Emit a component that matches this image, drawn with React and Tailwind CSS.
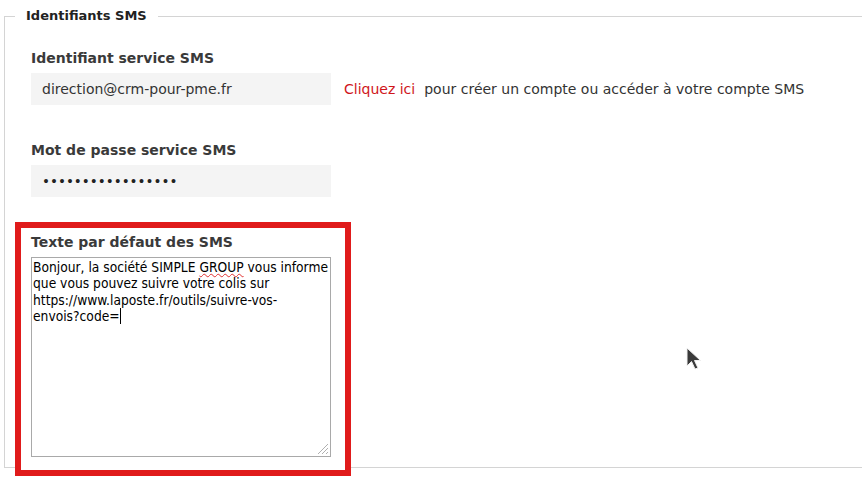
export default function App() {
  return (
    <div className="relative w-[862px] h-[486px] overflow-hidden bg-white font-['DejaVu_Sans',sans-serif] text-[14px] text-[#333]">
      <fieldset className="ml-[4px] mt-[8px] w-[900px] border border-[#d4d4d4] pl-[10px] pt-[26px]">
        <legend className="px-[11px] leading-[16px] text-[13px] font-semibold text-[#222]">Identifiants SMS</legend>
        <div className="pl-[16px]">
          {/* identifiant */}
          <div>
            <label className="block leading-[16px] font-semibold text-[#3a3a3a] mb-[7px]">Identifiant service SMS</label>
            <div className="flex items-center">
              <div className="w-[300px] h-[32px] bg-[#f4f4f4] pl-[11px] flex items-center">direction@crm-pour-pme.fr</div>
              <span className="ml-[13px] text-[#d0161b]">Cliquez ici</span>
              <span className="ml-[9px]">pour créer un compte ou accéder à votre compte SMS</span>
            </div>
          </div>

          {/* mot de passe */}
          <div className="mt-[37px]">
            <label className="block leading-[16px] font-semibold text-[#3a3a3a] mb-[7px]">Mot de passe service SMS</label>
            <div className="w-[300px] h-[32px] bg-[#f4f4f4] pl-[11px] flex items-center text-[13.5px] text-[#222]">•••••••••••••••••</div>
          </div>

          {/* texte par défaut, highlighted */}
          <div className="relative z-10 -ml-[16px] mt-[25px] -mb-[9px] w-[336px] border-[6px] border-[#e01b1b] bg-white pl-[10px] pt-[6px] pb-[13px]">
            <label className="block leading-[16px] font-semibold text-[#3a3a3a] mb-[7px]">Texte par défaut des SMS</label>
            <div className="relative w-[300px] h-[200px] border border-[#a9a9a9] px-[1px] pt-[1px] font-['DejaVu_Sans_Condensed','Liberation_Sans',sans-serif] text-[13.7px] leading-[16.3px] text-black">
              Bonjour, la société SIMPLE{" "}
              <span className="underline decoration-wavy decoration-[#e03030] decoration-1 underline-offset-[1px]">GROUP</span>{" "}
              vous informe que vous pouvez suivre votre colis sur https://www.laposte.fr/outils/suivre-vos-
              <br />
              envois?code=
              <span className="inline-block w-px h-[16px] bg-black align-text-bottom"></span>
              <svg className="absolute right-[1px] bottom-[1px]" width="12" height="12" viewBox="0 0 12 12">
                <line x1="11" y1="1" x2="1" y2="11" stroke="#b0b0b0" strokeWidth="1" />
                <line x1="11" y1="5" x2="5" y2="11" stroke="#b0b0b0" strokeWidth="1" />
                <line x1="11" y1="9" x2="9" y2="11" stroke="#b0b0b0" strokeWidth="1" />
              </svg>
            </div>
          </div>
        </div>
      </fieldset>

      {/* mouse pointer */}
      <svg className="absolute left-[686px] top-[347px]" width="18" height="26" viewBox="0 0 18 26">
        <path d="M1 1 L1 19 L5.5 14.5 L9 22 L12 21 L8.5 13.5 L14.5 13.5 Z" fill="#3a3a3a" stroke="#f0f0f0" strokeWidth="1" strokeLinejoin="round" />
      </svg>
    </div>
  );
}
